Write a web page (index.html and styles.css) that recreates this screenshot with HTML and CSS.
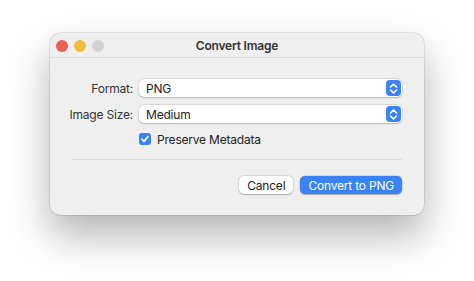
FILE: index.html
```html
<!DOCTYPE html>
<html>
<head>
  <meta charset="utf-8">
  <title>Convert Image</title>
  <link rel="stylesheet" href="styles.css">
</head>
<body>
  <div class="window">
    <div class="titlebar">
      <div class="lights">
        <span class="light red"></span>
        <span class="light yellow"></span>
        <span class="light gray"></span>
      </div>
      <div class="title">Convert Image</div>
    </div>

    <div class="content">
      <div class="form">
        <label class="label">Format:</label>
        <div class="select">
          <span>PNG</span>
          <span class="stepper">
            <svg width="15" height="17" viewBox="0 0 15 17">
              <path d="M4.5 7 L7.5 4 L10.5 7" fill="none" stroke="#fff" stroke-width="1.6" stroke-linecap="round" stroke-linejoin="round"/>
              <path d="M4.5 10 L7.5 13 L10.5 10" fill="none" stroke="#fff" stroke-width="1.6" stroke-linecap="round" stroke-linejoin="round"/>
            </svg>
          </span>
        </div>

        <label class="label">Image Size:</label>
        <div class="select">
          <span>Medium</span>
          <span class="stepper">
            <svg width="15" height="17" viewBox="0 0 15 17">
              <path d="M4.5 7 L7.5 4 L10.5 7" fill="none" stroke="#fff" stroke-width="1.6" stroke-linecap="round" stroke-linejoin="round"/>
              <path d="M4.5 10 L7.5 13 L10.5 10" fill="none" stroke="#fff" stroke-width="1.6" stroke-linecap="round" stroke-linejoin="round"/>
            </svg>
          </span>
        </div>

        <span></span>
        <div class="check-row">
          <span class="checkbox">
            <svg width="12" height="12" viewBox="0 0 12 12">
              <path d="M3 6.2 L5 8.4 L9 3.6" fill="none" stroke="#fff" stroke-width="1.7" stroke-linecap="round" stroke-linejoin="round"/>
            </svg>
          </span>
          <span>Preserve Metadata</span>
        </div>
      </div>

      <div class="divider"></div>

      <div class="actions">
        <button class="btn">Cancel</button>
        <button class="btn primary">Convert to PNG</button>
      </div>
    </div>
  </div>
</body>
</html>
```

FILE: styles.css
```css
html, body {
  height: 100%;
}
body {
  margin: 0;
  padding-top: 33px;
  box-sizing: border-box;
  background: #fff;
  font-family: Inter, 'Liberation Sans', sans-serif;
  font-size: 12px;
  letter-spacing: -0.2px;
  color: #222;
}
.window {
  margin-left: 50px;
  width: 374px;
  height: 182px;
  background: #efefef;
  border-radius: 10px;
  box-shadow: 0 0 0 0.5px rgba(0, 0, 0, 0.18), 0 20px 40px rgba(0, 0, 0, 0.3);
  overflow: hidden;
}
.titlebar {
  position: relative;
  height: 25px;
  display: flex;
  align-items: center;
  justify-content: center;
  border-bottom: 1px solid #dcdcdc;
  box-sizing: border-box;
}
.lights {
  position: absolute;
  left: 6px;
  top: 7px;
  display: flex;
  gap: 6px;
}
.light {
  width: 12px;
  height: 12px;
  border-radius: 50%;
}
.light.red { background: #ec5f57; }
.light.yellow { background: #f4bc3c; }
.light.gray { background: #d3d3d3; }
.title {
  font-weight: 600;
  font-size: 12px;
  color: #333;
  padding-top: 1px;
}
.content {
  padding: 21px 22px 0 22px;
}
.form {
  display: grid;
  grid-template-columns: 61px 1fr;
  column-gap: 6px;
  row-gap: 8px;
  align-items: center;
}
.label {
  justify-self: end;
  white-space: nowrap;
  color: #333;
}
.select {
  height: 18px;
  background: #fff;
  border-radius: 5px;
  box-shadow: 0 0 0 0.5px rgba(0, 0, 0, 0.12), 0 0.5px 1.5px rgba(0, 0, 0, 0.2);
  display: flex;
  align-items: center;
  justify-content: space-between;
  padding-left: 7px;
  padding-right: 1px;
}
.stepper {
  width: 15px;
  height: 16px;
  background: #3a82f7;
  border-radius: 4px;
  display: flex;
  align-items: center;
  justify-content: center;
}
.stepper svg { display: block; }
.check-row {
  display: flex;
  align-items: center;
  gap: 6px;
  height: 16px;
}
.checkbox {
  width: 12px;
  height: 12px;
  background: #3a82f7;
  border-radius: 3px;
  display: flex;
}
.divider {
  height: 1px;
  background: #dcdcdc;
  margin-top: 12px;
}
.actions {
  display: flex;
  justify-content: flex-end;
  gap: 7px;
  margin-top: 16px;
}
.btn {
  height: 18px;
  padding: 0 8px;
  border: none;
  border-radius: 5px;
  background: #fff;
  color: #222;
  font-family: inherit;
  font-size: 12px;
  letter-spacing: -0.2px;
  box-shadow: 0 0 0 0.5px rgba(0, 0, 0, 0.12), 0 0.5px 1.5px rgba(0, 0, 0, 0.25);
}
.btn.primary {
  background: #3a82f7;
  color: #fff;
  padding: 0 8px;
}
```
